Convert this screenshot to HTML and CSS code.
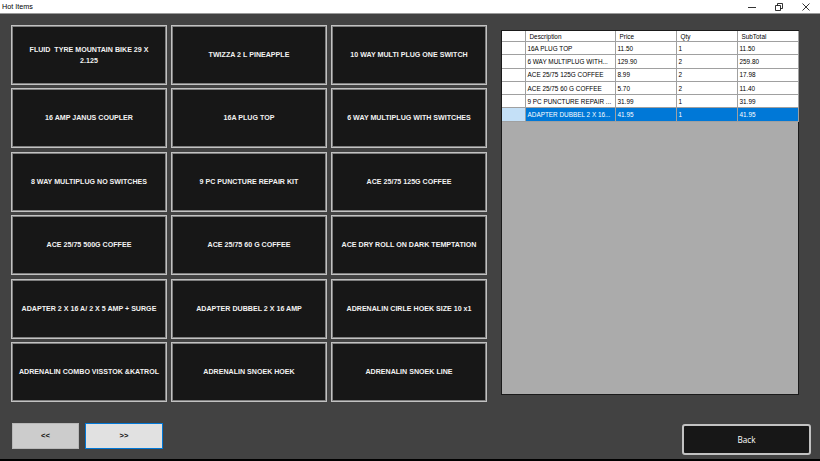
FILE: index.html
```html
<!DOCTYPE html>
<html>
<head>
<meta charset="utf-8">
<title>Hot Items</title>
<link rel="stylesheet" href="styles.css">
</head>
<body>
<div class="window">
  <div class="titlebar">
    <span class="title">Hot Items</span>
    <div class="controls">
      <span class="ctl"><svg width="8" height="8" viewBox="0 0 8 8"><path d="M0 4.5h8" stroke="#000" stroke-width="0.8"/></svg></span>
      <span class="ctl"><svg width="8" height="8" viewBox="0 0 8 8"><path d="M0.5 2.5h5v5h-5z M2.5 2.5v-2h5v5h-2" fill="none" stroke="#000" stroke-width="0.8"/></svg></span>
      <span class="ctl"><svg width="8" height="8" viewBox="0 0 8 8"><path d="M0.5 0.5l7 7M7.5 0.5l-7 7" stroke="#000" stroke-width="0.8"/></svg></span>
    </div>
  </div>
  <div class="content">
    <div class="left">
      <div class="items">
        <button class="item">FLUID&nbsp; TYRE MOUNTAIN BIKE 29 X<br>2.125</button>
        <button class="item">TWIZZA 2 L PINEAPPLE</button>
        <button class="item">10 WAY MULTI PLUG ONE SWITCH</button>
        <button class="item">16 AMP JANUS COUPLER</button>
        <button class="item">16A PLUG TOP</button>
        <button class="item">6 WAY MULTIPLUG WITH SWITCHES</button>
        <button class="item">8 WAY MULTIPLUG NO SWITCHES</button>
        <button class="item">9 PC PUNCTURE REPAIR KIT</button>
        <button class="item">ACE 25/75 125G COFFEE</button>
        <button class="item">ACE 25/75 500G COFFEE</button>
        <button class="item">ACE 25/75 60 G COFFEE</button>
        <button class="item">ACE DRY ROLL ON DARK TEMPTATION</button>
        <button class="item">ADAPTER 2 X 16 A/ 2 X 5 AMP + SURGE</button>
        <button class="item">ADAPTER DUBBEL 2 X 16 AMP</button>
        <button class="item">ADRENALIN CIRLE HOEK SIZE 10 x1</button>
        <button class="item">ADRENALIN COMBO VISSTOK &amp;KATROL</button>
        <button class="item">ADRENALIN SNOEK HOEK</button>
        <button class="item">ADRENALIN SNOEK LINE</button>
      </div>
      <div class="nav">
        <button class="navbtn prev">&lt;&lt;</button>
        <button class="navbtn next">&gt;&gt;</button>
      </div>
    </div>
    <div class="right">
      <div class="grid">
        <table>
          <colgroup>
            <col class="c0"><col class="c1"><col class="c2"><col class="c3"><col class="c4">
          </colgroup>
          <thead>
            <tr><th class="rh"></th><th>Description</th><th>Price</th><th>Qty</th><th>SubTotal</th></tr>
          </thead>
          <tbody>
            <tr><td class="rh"></td><td>16A PLUG TOP</td><td>11.50</td><td>1</td><td>11.50</td></tr>
            <tr><td class="rh"></td><td>6 WAY MULTIPLUG WITH...</td><td>129.90</td><td>2</td><td>259.80</td></tr>
            <tr><td class="rh"></td><td>ACE 25/75 125G COFFEE</td><td>8.99</td><td>2</td><td>17.98</td></tr>
            <tr><td class="rh"></td><td>ACE 25/75 60 G COFFEE</td><td>5.70</td><td>2</td><td>11.40</td></tr>
            <tr><td class="rh"></td><td>9 PC PUNCTURE REPAIR ...</td><td>31.99</td><td>1</td><td>31.99</td></tr>
            <tr class="sel"><td class="rh"></td><td>ADAPTER DUBBEL 2 X 16...</td><td>41.95</td><td>1</td><td>41.95</td></tr>
          </tbody>
        </table>
      </div>
      <div class="backrow">
        <button class="back">Back</button>
      </div>
    </div>
  </div>
</div>
</body>
</html>
```

FILE: styles.css
```css
html, body {
  margin: 0;
  padding: 0;
  background: #000;
}
.window {
  width: 820px;
  height: 459px;
  background: #424242;
  display: flex;
  flex-direction: column;
  overflow: hidden;
  font-family: "Liberation Sans", Arial, sans-serif;
}
.titlebar {
  height: 13px;
  background: #fff;
  border-bottom: 1px solid #9a9a9a;
  display: flex;
  align-items: center;
  justify-content: space-between;
}
.title {
  font-size: 7.2px;
  color: #000;
  padding-left: 2px;
}
.controls {
  display: flex;
  align-items: center;
  padding-right: 10px;
}
.ctl {
  display: flex;
  width: 8px;
  height: 8px;
  margin-left: 19px;
}
.content {
  flex: 1;
  display: flex;
}
.left {
  width: 490px;
  padding: 11px 0 0 11px;
  box-sizing: border-box;
}
.items {
  display: grid;
  grid-template-columns: repeat(3, 156px);
  grid-auto-rows: 60px;
  column-gap: 4px;
  row-gap: 3.4px;
}
.item {
  margin: 0;
  background: #171717;
  border: 1px solid #c2c2c2;
  box-shadow: inset 0 0 0 1px #7e7e7e;
  color: #f2f2f2;
  font-family: "Liberation Sans", Arial, sans-serif;
  font-weight: bold;
  font-size: 7.1px;
  line-height: 11px;
  padding: 1px 5px 0;
  text-align: center;
}
.nav {
  display: flex;
  margin-top: 21px;
  padding-left: 1px;
}
.navbtn {
  margin: 0;
  height: 26px;
  font-family: "Liberation Sans", Arial, sans-serif;
  font-weight: bold;
  font-size: 7.6px;
  color: #111;
  padding: 0;
}
.prev {
  width: 67px;
  background: #cccccc;
  border: 1px solid #b8b8b8;
}
.next {
  width: 78px;
  margin-left: 6px;
  background: #e1e1e1;
  border: 1px solid #0078d7;
}
.right {
  width: 330px;
  padding: 16px 0 0 11px;
  box-sizing: border-box;
}
.grid {
  width: 298px;
  height: 365px;
  box-sizing: border-box;
  background: #ababab;
  border: 1px solid #1a1a1a;
}
table {
  border-collapse: collapse;
  table-layout: fixed;
  width: 296px;
  font-size: 6.4px;
  color: #000;
}
col.c0 { width: 23px; }
col.c1 { width: 90px; }
col.c2 { width: 61px; }
col.c3 { width: 61px; }
col.c4 { width: 61px; }
th, td {
  background: #fff;
  border-right: 1px solid #a0a0a0;
  border-bottom: 1px solid #a0a0a0;
  white-space: nowrap;
  overflow: hidden;
  text-align: left;
  padding: 0 0 0 2px;
}
th {
  font-weight: normal;
  height: 10px;
  padding-left: 4px;
}
td {
  height: 12.3px;
}
th.rh, td.rh {
  padding: 0;
}
tr.sel td {
  background: #0078d7;
  color: #fff;
}
tr.sel td.rh {
  background: #c4e0f7;
}
.backrow {
  display: flex;
  margin-top: 29px;
  padding-left: 181px;
}
.back {
  margin: 0;
  width: 129px;
  height: 31px;
  background: #171717;
  border: 2px solid #c2c2c2;
  border-radius: 3px;
  color: #fff;
  font-family: "Open Sans", "Liberation Sans", sans-serif;
  font-size: 8.2px;
  padding: 0;
}
```
